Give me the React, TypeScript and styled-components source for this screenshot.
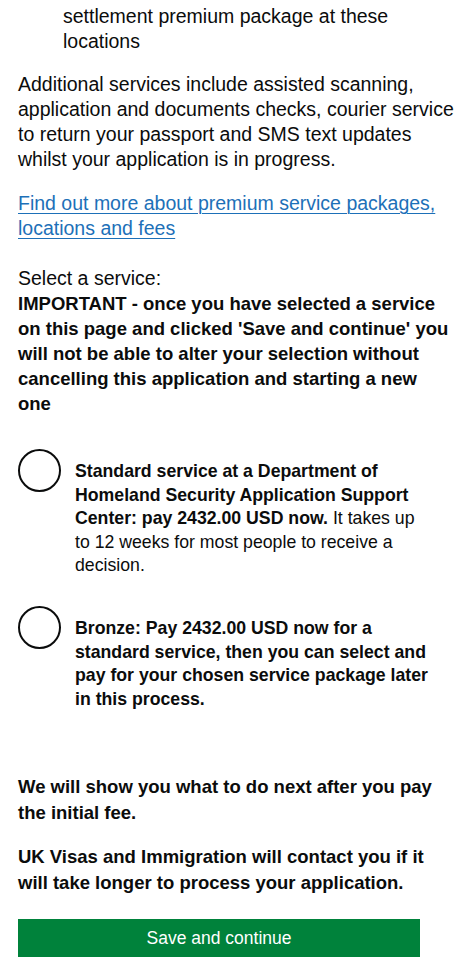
import React from "react";
import styled, { createGlobalStyle } from "styled-components";

const GlobalStyle = createGlobalStyle`
  html, body {
    margin: 0;
    padding: 0;
    background: #ffffff;
  }
  body {
    font-family: "Liberation Sans", Arial, sans-serif;
    color: #0b0c0c;
    -webkit-font-smoothing: antialiased;
  }
`;

const Page = styled.main`
  padding: 4px 15px 0 18px;
  box-sizing: border-box;
  width: 474px;
`;

const Body = styled.p<{ $mt?: number }>`
  margin: ${(p) => p.$mt ?? 0}px 0 0 0;
  font-size: 19.5px;
  line-height: 25px;
  font-weight: 400;
`;

const ListContinuation = styled(Body)`
  padding-left: 45px;
`;

const Link = styled.a`
  color: #1d70b8;
  text-decoration: underline;
  text-decoration-thickness: 1px;
  text-underline-offset: 3px;
`;

const Fieldset = styled.fieldset`
  border: 0;
  margin: 24.5px 0 0 0;
  padding: 0;
  min-width: 0;
`;

const Legend = styled.legend`
  padding: 0;
  font-size: 19.5px;
  line-height: 25px;
`;

const Important = styled.strong`
  display: block;
  padding-right: 7px;
  font-size: 18.5px;
  line-height: 25px;
  font-weight: 700;
`;

const Radios = styled.div`
  display: flex;
  flex-direction: column;
  gap: 28.5px;
  margin-top: 33.5px;
`;

const RadioItem = styled.div`
  display: flex;
  align-items: flex-start;
  gap: 14px;
`;

const RadioInput = styled.input`
  appearance: none;
  -webkit-appearance: none;
  flex: 0 0 43px;
  width: 43px;
  height: 43px;
  margin: 0;
  border: 2px solid #0b0c0c;
  border-radius: 50%;
  box-sizing: border-box;
  background: #fff;
`;

const RadioLabel = styled.label`
  padding-top: 11px;
  max-width: 355px;
  font-size: 17.7px;
  line-height: 23.5px;
  font-weight: 400;
  flex: 1;
`;

const Bold = styled.strong`
  font-weight: 700;
`;

const Notice = styled.p<{ $mt: number }>`
  margin: ${(p) => p.$mt}px 0 0 0;
  padding-right: 7px;
  font-size: 18.5px;
  line-height: 25.5px;
  font-weight: 700;
`;

const Button = styled.button`
  display: block;
  margin: 23.5px 0 0 0;
  width: 402px;
  height: 38px;
  border: 0;
  padding: 0;
  background: #00823b;
  color: #ffffff;
  font-family: "Liberation Sans", Arial, sans-serif;
  font-size: 17.5px;
  line-height: 39px;
  text-align: center;
  box-shadow: 0 2px 0 #003618;
  cursor: pointer;
`;

export default function App() {
  return (
    <>
      <GlobalStyle />
      <Page>
        <ListContinuation>
          settlement premium package at these
          <br />
          locations
        </ListContinuation>
        <Body $mt={18}>
          Additional services include assisted scanning, application and
          documents checks, courier service to return your passport and SMS
          text updates whilst your application is in progress.
        </Body>
        <Body $mt={19}>
          <Link href="#">
            Find out more about premium service packages, locations and fees
          </Link>
        </Body>
        <Fieldset>
          <Legend>
            Select a service:
            <Important>
              IMPORTANT - once you have selected a service on this page and
              clicked 'Save and continue' you will not be able to alter your
              selection without cancelling this application and starting a new
              one
            </Important>
          </Legend>
          <Radios>
            <RadioItem>
              <RadioInput type="radio" name="service" id="standard" />
              <RadioLabel htmlFor="standard">
                <Bold>
                  Standard service at a Department of Homeland Security
                  Application Support Center: pay 2432.00 USD now.
                </Bold>{" "}
                It takes up to 12 weeks for most people to receive a decision.
              </RadioLabel>
            </RadioItem>
            <RadioItem>
              <RadioInput type="radio" name="service" id="bronze" />
              <RadioLabel htmlFor="bronze">
                <Bold>
                  Bronze: Pay 2432.00 USD now for a standard service, then you
                  can select and pay for your chosen service package later in
                  this process.
                </Bold>
              </RadioLabel>
            </RadioItem>
          </Radios>
        </Fieldset>
        <Notice $mt={63}>
          We will show you what to do next after you pay the initial fee.
        </Notice>
        <Notice $mt={19}>
          UK Visas and Immigration will contact you if it will take longer to
          process your application.
        </Notice>
        <Button type="button">Save and continue</Button>
      </Page>
    </>
  );
}
